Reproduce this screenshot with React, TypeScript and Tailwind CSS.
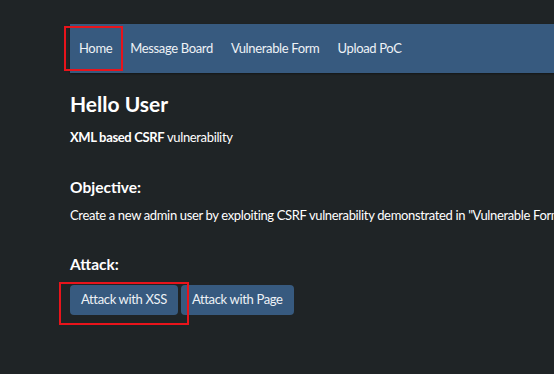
export default function App() {
  const links = ["Home", "Message Board", "Vulnerable Form", "Upload PoC"];

  return (
    <div className="relative w-[554px] h-[374px] overflow-hidden bg-[#1f2426] text-white font-['Lato','Open_Sans',sans-serif]">
      <div className="pt-6 pl-[70px]">
        {/* Navbar */}
        <nav className="h-[49px] w-[600px] bg-[#375a7f] flex items-center shadow-[0_1px_2px_rgba(0,0,0,0.4)]">
          {links.map((l) => (
            <a key={l} className="px-[9px] text-[13px] tracking-[-0.35px] leading-[49px] text-[#eef2f6] whitespace-nowrap">
              {l}
            </a>
          ))}
        </nav>

        {/* Content */}
        <div className="whitespace-nowrap">
          <h1 className="mt-[18px] text-[21px] font-bold leading-[26px]">Hello User</h1>
          <p className="mt-[11px] text-[13px] tracking-[-0.35px] leading-[18px]">
            <b>XML based CSRF</b> vulnerability
          </p>

          <h2 className="mt-[31px] text-[15.5px] font-bold leading-[20px]">Objective:</h2>
          <p className="mt-[9px] text-[13px] tracking-[-0.35px] leading-[18px]">
            Create a new admin user by exploiting CSRF vulnerability demonstrated in "Vulnerable Form"
          </p>

          <h2 className="mt-[30px] text-[15.5px] font-bold leading-[20px]">Attack:</h2>
          <div className="mt-[11px] flex gap-[3px]">
            <button className="h-[30px] px-[11px] rounded-[4px] bg-[#375a7f] text-[13px] tracking-[-0.35px] text-[#eef2f6]">
              Attack with XSS
            </button>
            <button className="h-[30px] px-[11px] rounded-[4px] bg-[#375a7f] text-[13px] tracking-[-0.35px] text-[#eef2f6]">
              Attack with Page
            </button>
          </div>
        </div>
      </div>

      {/* Red annotation boxes */}
      <div className="absolute left-[64px] top-[26px] w-[59px] h-[45px] border-2 border-[#e8141b]" />
      <div className="absolute left-[59px] top-[282px] w-[130px] h-[43px] border-2 border-[#e8141b]" />
    </div>
  );
}
